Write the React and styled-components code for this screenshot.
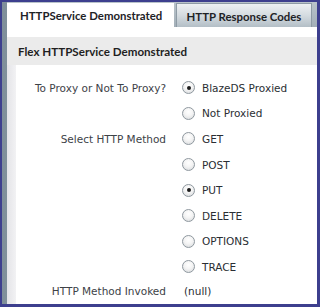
import React from "react";
import styled, { createGlobalStyle } from "styled-components";

const Global = createGlobalStyle`
  html, body { margin: 0; padding: 0; }
  body { width: 320px; height: 307px; overflow: hidden; background: #3d3f8e; }
  #root { width: 320px; height: 307px; }
`;

const Frame = styled.div`
  box-sizing: border-box;
  width: 320px;
  height: 307px;
  padding: 2px 3px 3px 2px;
  background: #3d3f8e;
  font-family: "DejaVu Sans", Verdana, sans-serif;
`;

const Window = styled.div`
  height: 100%;
  display: flex;
  flex-direction: column;
  padding-left: 5px;
  background: linear-gradient(to right, #7f8f9a, #a7b3bb);
`;

const TabBar = styled.div`
  display: flex;
  height: 25px;
  background: linear-gradient(to bottom, #b9c3ca, #a3afb8);
`;

const Tab = styled.div`
  box-sizing: border-box;
  display: flex;
  align-items: center;
  justify-content: ${(p) => (p.active ? "flex-start" : "center")};
  white-space: nowrap;
  font-family: Lato, "Liberation Sans", sans-serif;
  font-weight: bold;
  font-size: 11.4px;
  color: #1e2226;
  width: ${(p) => p.w}px;
  padding-left: ${(p) => p.pl}px;
  margin-top: 1px;
  margin-right: ${(p) => (p.active ? 2 : 0)}px;
  background: ${(p) =>
    p.active
      ? "#ffffff"
      : "linear-gradient(to bottom, #eef1f3 0%, #d4dbe0 50%, #b3bec6 100%)"};
  border: ${(p) => (p.active ? "none" : "1px solid #8e9ba5")};
  border-bottom: none;
  padding-top: ${(p) => (p.active ? 0 : 2)}px;
`;

const TabFill = styled.div`
  flex: 1;
`;

const Under = styled.div`
  height: 10px;
  background: #fff;
`;

const Header = styled.div`
  height: 28px;
  display: flex;
  align-items: center;
  padding-left: 11px;
  background: #ebebeb;
  white-space: nowrap;
  font-family: Lato, "Liberation Sans", sans-serif;
  font-weight: bold;
  font-size: 11.6px;
  color: #1f1f1f;
`;

const Body = styled.div`
  flex: 1;
  display: flex;
  background: #fff;
`;

const Strip = styled.div`
  width: 9px;
  background: linear-gradient(to right, #e4e4e8, #f2f2f4);
`;

const Form = styled.div`
  flex: 1;
  padding-top: 10px;
  display: flex;
  flex-direction: column;
`;

const Row = styled.div`
  display: grid;
  grid-template-columns: 150px 1fr;
  column-gap: 16px;
  align-items: center;
  height: ${(p) => p.h || 25.6}px;
  font-size: 10.5px;
`;

const Label = styled.div`
  text-align: right;
  color: #3d4247;
  white-space: nowrap;
`;

const Option = styled.div`
  display: flex;
  align-items: center;
  gap: 7px;
  color: #2a2e33;
  white-space: nowrap;
  margin-left: ${(p) => p.ml || 0}px;
`;

const Radio = styled.span`
  box-sizing: border-box;
  width: 13px;
  height: 13px;
  border-radius: 50%;
  border: 1px solid #8f989f;
  background: radial-gradient(circle at 50% 35%, #ffffff 0%, #f4f4f4 45%, #d3d6d9 100%);
  display: flex;
  align-items: center;
  justify-content: center;
  &::after {
    content: "";
    width: 4px;
    height: 4px;
    border-radius: 50%;
    background: ${(p) => (p.on ? "#1c1c1c" : "transparent")};
  }
`;

const RadioRow = ({ label, text, on }) => (
  <Row>
    <Label>{label}</Label>
    <Option>
      <Radio on={on ? 1 : 0} />
      <span>{text}</span>
    </Option>
  </Row>
);

export default function App() {
  return (
    <>
      <Global />
      <Frame>
        <Window>
          <TabBar>
            <Tab active w={167} pl={13}>HTTPService Demonstrated</Tab>
            <Tab w={136} pl={0}>HTTP Response Codes</Tab>
            <TabFill />
          </TabBar>
          <Under />
          <Header>Flex HTTPService Demonstrated</Header>
          <Body>
            <Strip />
            <Form>
              <RadioRow label="To Proxy or Not To Proxy?" text="BlazeDS Proxied" on />
              <RadioRow text="Not Proxied" />
              <RadioRow label="Select HTTP Method" text="GET" />
              <RadioRow text="POST" />
              <RadioRow text="PUT" on />
              <RadioRow text="DELETE" />
              <RadioRow text="OPTIONS" />
              <RadioRow text="TRACE" />
              <Row h={22}>
                <Label>HTTP Method Invoked</Label>
                <Option ml={2}>(null)</Option>
              </Row>
            </Form>
          </Body>
        </Window>
      </Frame>
    </>
  );
}
